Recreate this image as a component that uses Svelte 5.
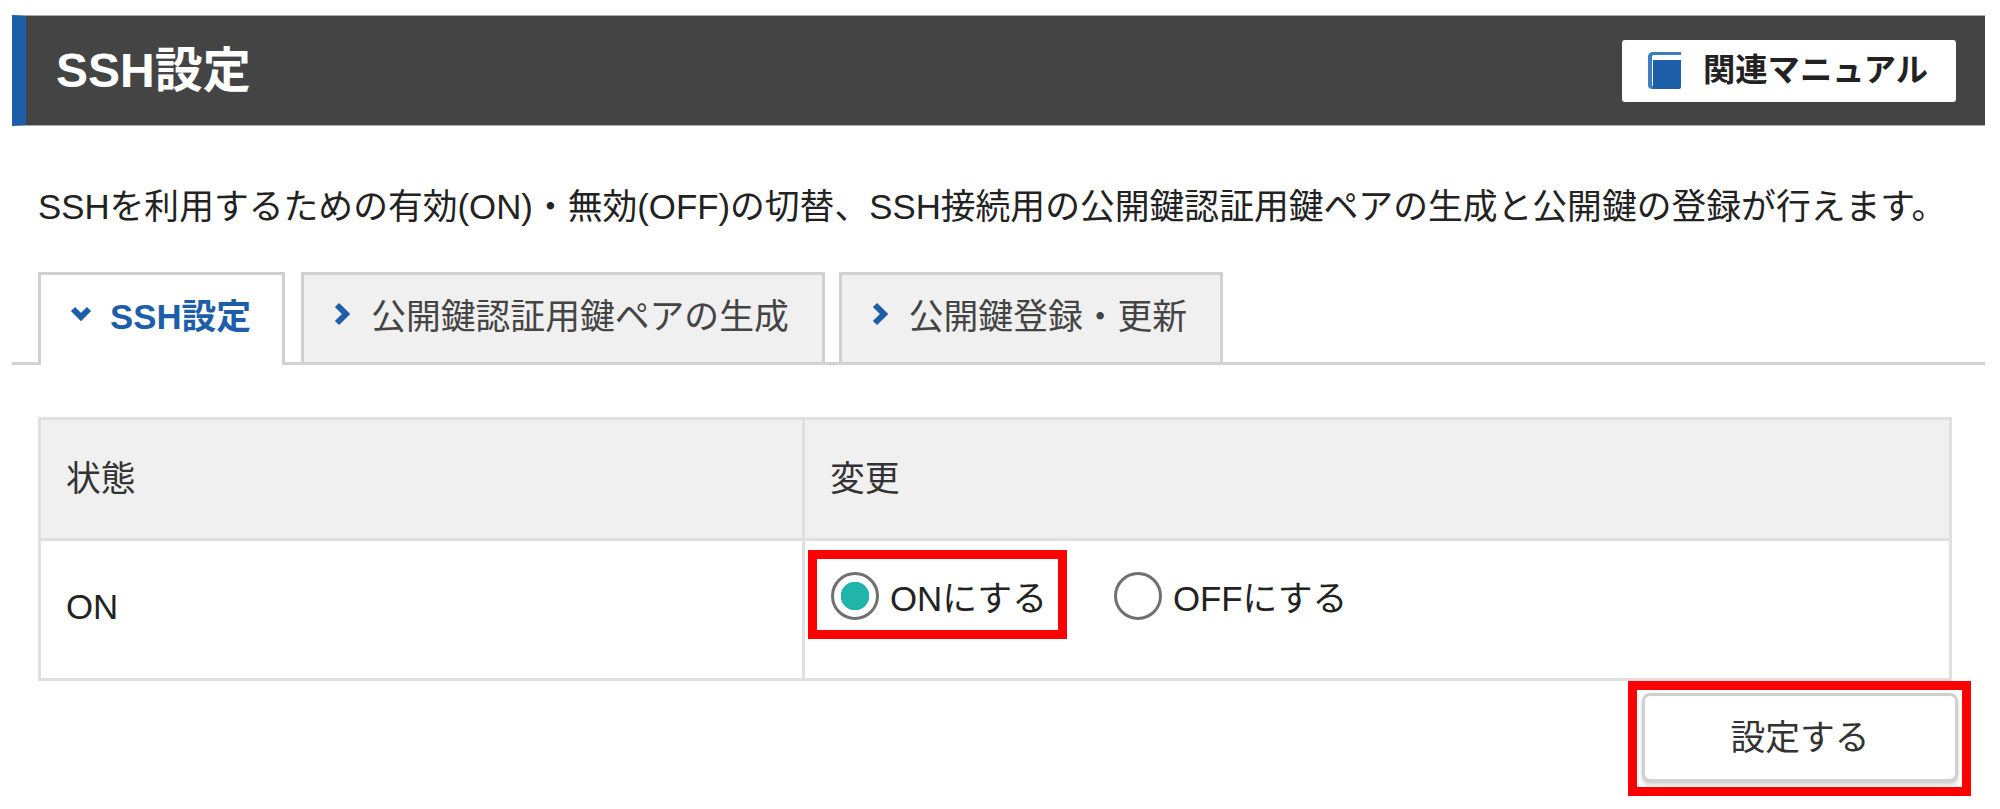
<script>
  let choice = $state('on');
  const tabs = [
    { label: 'SSH設定', active: true },
    { label: '公開鍵認証用鍵ペアの生成', active: false },
    { label: '公開鍵登録・更新', active: false }
  ];
</script>

<div class="page">
  <header class="titlebar">
    <h1>SSH設定</h1>
    <a class="manual" href="#manual">
      <svg class="book" width="33" height="37" viewBox="0 0 33 37" aria-hidden="true">
        <path d="M5 0H33V3H6C4.5 3 4 4 4 5V32C4 33.500 4.500 34 6 34V37H4C1.500 37 0 35.500 0 33V5C0 2 2 0 5 0Z" fill="#3f7fc0"/>
        <path d="M5 8H33V35C33 36.200 32.200 37 31 37H5Z" fill="#1d5ea8"/>
      </svg>
      <span>関連マニュアル</span>
    </a>
  </header>

  <p class="desc">SSHを利用するための有効(ON)・無効(OFF)の切替、SSH接続用の公開鍵認証用鍵ペアの生成と公開鍵の登録が行えます。</p>

  <nav class="tabs">
    {#each tabs as tab}
      <a class="tab" class:active={tab.active} href="#tab">
        {#if tab.active}
          <svg width="22" height="17" viewBox="0 0 22 17" aria-hidden="true"><path d="M3 4L11 12L19 4" fill="none" stroke="#1d5ea8" stroke-width="6"/></svg>
        {:else}
          <svg width="17" height="24" viewBox="0 0 17 24" aria-hidden="true"><path d="M4 3L13 12L4 21" fill="none" stroke="#1d5ea8" stroke-width="6"/></svg>
        {/if}
        <span>{tab.label}</span>
      </a>
    {/each}
  </nav>

  <table>
    <thead>
      <tr><th class="col-a">状態</th><th>変更</th></tr>
    </thead>
    <tbody>
      <tr>
        <td class="state">ON</td>
        <td class="change">
          <div class="choices">
            <label class="choice marked">
              <input type="radio" name="ssh" value="on" bind:group={choice} />
              <span>ONにする</span>
            </label>
            <label class="choice">
              <input type="radio" name="ssh" value="off" bind:group={choice} />
              <span>OFFにする</span>
            </label>
          </div>
        </td>
      </tr>
    </tbody>
  </table>

  <div class="actions">
    <div class="marked submit-mark">
      <button type="button">設定する</button>
    </div>
  </div>
</div>

<style>
  :global(body) {
    background: #fff;
  }
  .page {
    padding: 15px 15px 0 12px;
    font-family: "Liberation Sans", "Noto Sans CJK JP", sans-serif;
    font-size: 34.8px;
    color: #222;
  }
  .titlebar {
    box-sizing: border-box;
    height: 111px;
    background: #444;
    border-left: 14px solid #1d5ea8;
    border-top: 1px solid #aaa;
    border-bottom: 1px solid #aaa;
    padding: 0 29px 0 30px;
    display: flex;
    align-items: center;
    justify-content: space-between;
  }
  h1 {
    margin: 0 0 10px;
    font-size: 48px;
    font-weight: 700;
    color: #fff;
  }
  .manual {
    box-sizing: border-box;
    width: 334px;
    height: 62px;
    background: #fff;
    border-radius: 3px;
    display: flex;
    align-items: center;
    gap: 22px;
    padding-left: 26px;
    font-size: 32.3px;
    font-weight: 700;
    line-height: 1;
    color: #222;
    text-decoration: none;
  }
  .book {
    flex: none;
  }
  .desc {
    margin: 53px 0 0 26px;
    line-height: 56px;
    white-space: nowrap;
  }
  .tabs {
    margin-top: 37px;
    height: 93px;
    box-sizing: border-box;
    padding-left: 26px;
    border-bottom: 3px solid #d2d2d2;
    display: flex;
    align-items: flex-start;
    gap: 14px;
  }
  .tab {
    box-sizing: border-box;
    height: 90px;
    padding: 0 33px 10px 29px;
    background: #f0f0f0;
    border: 3px solid #d0d0d0;
    border-bottom: 0;
    display: flex;
    align-items: center;
    gap: 21px;
    color: #444;
    text-decoration: none;
    white-space: nowrap;
  }
  .tab.active {
    height: 93px;
    padding: 0 31px 13px 29px;
    margin-right: 2px;
    gap: 18px;
    background: #fff;
    color: #1d5ea8;
    font-weight: 700;
  }
  table {
    box-sizing: border-box;
    width: 1914px;
    margin: 52px 0 0 26px;
    border-collapse: collapse;
    table-layout: fixed;
    border: 3px solid #e0e0e0;
  }
  th, td {
    border: 3px solid #e0e0e0;
    text-align: left;
    font-weight: 400;
    padding: 0 0 0 25px;
  }
  .col-a {
    width: 736px;
  }
  th {
    height: 112px;
    background: #f0f0f0;
    color: #333;
    padding-bottom: 6px;
  }
  td {
    height: 131px;
    padding-bottom: 6px;
  }
  td.change {
    height: 128px;
    padding: 9px 0 0 3px;
    vertical-align: top;
  }
  .choices {
    display: flex;
    gap: 24px;
    align-items: flex-start;
  }
  .choice {
    box-sizing: border-box;
    height: 89px;
    display: flex;
    align-items: center;
    gap: 11px;
    padding: 3px 11px 0 14px;
    border: 9px solid transparent;
  }
  .marked {
    border: 9px solid #f00;
  }
  input {
    appearance: none;
    flex: none;
    box-sizing: border-box;
    width: 48px;
    height: 48px;
    margin: 0;
    border: 3px solid #707070;
    border-radius: 50%;
    background: #fff;
  }
  input:checked {
    background: radial-gradient(circle, #1fb5a8 0 14px, #fff 14.5px);
  }
  .actions {
    display: flex;
    justify-content: flex-end;
    margin: 0 14px 0 0;
  }
  .submit-mark {
    box-sizing: border-box;
    width: 343px;
    height: 115px;
    padding: 3px 4px 5px 5px;
  }
  button {
    display: block;
    box-sizing: border-box;
    width: 100%;
    height: 100%;
    padding: 0 0 6px;
    background: #fff;
    border: 3px solid #d0d0d0;
    border-radius: 8px;
    box-shadow: 0 3px 4px rgba(0, 0, 0, 0.18);
    font: inherit;
    color: #333;
  }
</style>
